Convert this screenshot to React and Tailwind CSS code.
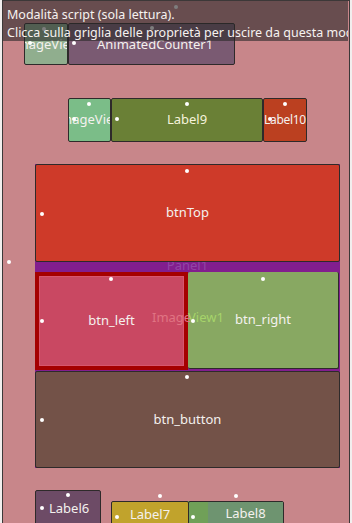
import React from "react";

// one designer widget on the canvas: coloured box, clipped centred caption
function Box({ className, label, textClass = "" }) {
  return (
    <div
      className={`absolute flex items-center justify-center overflow-hidden whitespace-nowrap rounded-[2px] border border-[#2e2a2a] text-[13px] text-[#f4f1ee] ${className}`}
    >
      <span className={textClass}>{label}</span>
    </div>
  );
}

function Dot({ className }) {
  return <div className={`absolute h-[4px] w-[4px] rounded-full bg-white ${className}`} />;
}

export default function App() {
  return (
    <div
      className="relative h-[523px] w-[352px] overflow-hidden bg-[#f2eeee]"
      style={{ fontFamily: '"Noto Sans", "Open Sans", sans-serif' }}
    >
      {/* canvas */}
      <div className="absolute left-[2px] top-0 h-[540px] w-[348px] border border-[#3c3838] bg-[#c8868a]" />

      {/* top row (under the banner) */}
      <Box className="left-[24px] top-[23px] h-[42px] w-[44px] bg-[#90ae8e] items-end pb-[10px]" label="ImageView" />
      <Box className="left-[68px] top-[23px] h-[42px] w-[167px] bg-[#7a5a72] justify-start items-end pb-[10px] pl-[28px]" label="AnimatedCounter1" />
      <Dot className="left-[28px] top-[41px]" />
      <Dot className="left-[72px] top-[41px]" />
      <Dot className="left-[42px] top-[27px]" />
      <Dot className="left-[150px] top-[26px]" />
      <Dot className="left-[174px] top-[5px]" />

      {/* second row */}
      <Box className="left-[68px] top-[98px] h-[44px] w-[43px] bg-[#7bbd88]" label="ImageView" />
      <Box className="left-[111px] top-[98px] h-[44px] w-[152px] bg-[#6a8036]" label="Label9" textClass="text-[#f6f3dc]" />
      <Box className="left-[263px] top-[98px] h-[44px] w-[44px] bg-[#bb4020] justify-start pl-0" label="Label10" textClass="text-[12px] tracking-[-0.3px]" />
      <Dot className="left-[87px] top-[102px]" />
      <Dot className="left-[185px] top-[102px]" />
      <Dot className="left-[283px] top-[102px]" />
      <Dot className="left-[72px] top-[117px]" />
      <Dot className="left-[115px] top-[117px]" />
      <Dot className="left-[268px] top-[117px]" />

      {/* canvas dot */}
      <Dot className="left-[7px] top-[260px]" />

      {/* Panel1 */}
      <div className="absolute left-[35px] top-[164px] h-[304px] w-[305px] bg-[#821e8e]">
        <div className="absolute left-0 top-[92px] w-full text-center text-[13px] text-[#9244a6]">Panel1</div>
      </div>
      <Box className="left-[35px] top-[164px] h-[98px] w-[305px] bg-[#ce3a29]" label="btnTop" />

      {/* btn_left with its red focus frame */}
      <div className="absolute left-[35px] top-[272px] flex h-[98px] w-[153px] bg-[#a50000] p-[4px]">
        <div className="flex flex-1 items-center justify-center border border-[#d8566e] bg-[#c94862] text-[13px] text-[#f4f1ee]">
          btn_left
        </div>
      </div>
      <div className="absolute left-[188px] top-[272px] flex h-[97px] w-[151px] items-center justify-center rounded-[2px] border-r border-b border-[#2e2a2a] bg-[#88a862] text-[13px] text-[#f4f1ee]">
        btn_right
      </div>
      <div className="absolute left-[152px] top-[308px] text-[13px] text-[#e07483]">Image</div>
      <div className="absolute left-[188px] top-[308px] text-[13px] text-[#a6d46a]">View1</div>

      <Box className="left-[35px] top-[371px] h-[97px] w-[305px] bg-[#735248]" label="btn_button" />

      <Dot className="left-[185px] top-[169px]" />
      <Dot className="left-[40px] top-[212px]" />
      <Dot className="left-[109px] top-[277px]" />
      <Dot className="left-[40px] top-[319px]" />
      <Dot className="left-[261px] top-[277px]" />
      <Dot className="left-[191px] top-[319px]" />
      <Dot className="left-[185px] top-[375px]" />
      <Dot className="left-[40px] top-[418px]" />

      {/* bottom row */}
      <Box className="left-[35px] top-[490px] h-[40px] w-[66px] bg-[#6d4b66] justify-start pl-[13px] items-start pt-[8px]" label="Label6" />
      <Box className="left-[111px] top-[501px] h-[30px] w-[78px] bg-[#c1a32c] items-start pt-[3px]" label="Label7" />
      <div className="absolute left-[188px] top-[501px] h-[30px] w-[22px] bg-[#70a058]" />
      <Box className="left-[188px] top-[501px] h-[30px] w-[96px] bg-transparent items-start pt-[3px]" label="" />
      <div className="absolute left-[208px] top-[502px] flex h-[30px] w-[75px] justify-center bg-[#6e9470] pt-[2px] text-[13px] text-[#f4f1ee]">
        Label8
      </div>
      <Dot className="left-[66px] top-[493px]" />
      <Dot className="left-[40px] top-[506px]" />
      <Dot className="left-[158px] top-[494px]" />
      <Dot className="left-[115px] top-[515px]" />
      <Dot className="left-[234px] top-[494px]" />
      <Dot className="left-[191px] top-[515px]" />

      {/* read-only banner */}
      <div className="absolute left-[3px] top-[1px] h-[40px] w-[345px] overflow-hidden whitespace-nowrap bg-[rgba(40,40,40,0.6)] pl-[4px] pt-[5px] text-[12.5px] leading-[18px] text-[#f6f2f0]">
        <div>Modalità script (sola lettura).</div>
        <div>Clicca sulla griglia delle proprietà per uscire da questa modalità.</div>
      </div>
    </div>
  );
}
